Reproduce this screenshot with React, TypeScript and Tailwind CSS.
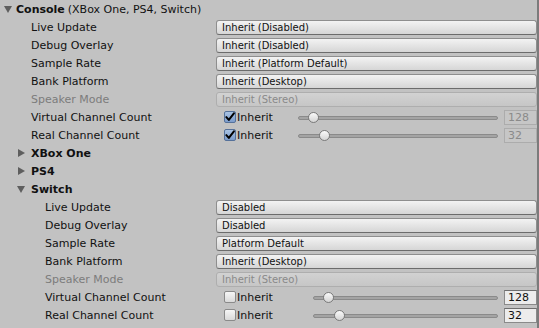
import type { ReactNode } from "react";

const font = { fontFamily: '"DejaVu Sans", Verdana, sans-serif' };

function DownArrow({ className }: { className: string }) {
  return (
    <svg width="8" height="7" viewBox="0 0 8 7" className={className}>
      <path d="M0 0 H8 L4 7 Z" fill="#5e5e5e" />
    </svg>
  );
}

function RightArrow({ className }: { className: string }) {
  return (
    <svg width="7" height="8" viewBox="0 0 7 8" className={className}>
      <path d="M0 0 L7 4 L0 8 Z" fill="#5e5e5e" />
    </svg>
  );
}

function Row({
  indent,
  label,
  disabled,
  children,
}: {
  indent: number;
  label: string;
  disabled?: boolean;
  children: ReactNode;
}) {
  return (
    <div className="flex h-[18px] items-center">
      <div
        className={`w-[216px] shrink-0 text-[11px] leading-none ${
          disabled ? "text-[#7c7c7c]" : "text-[#111]"
        } ${indent === 2 ? "pl-[45px]" : "pl-[31px]"}`}
      >
        {label}
      </div>
      <div className="flex-1 min-w-0">{children}</div>
    </div>
  );
}

function Popup({ value, disabled }: { value: string; disabled?: boolean }) {
  return (
    <div
      className={`h-[15px] rounded-[3px] border pl-[5px] text-[10px] leading-[13px] whitespace-nowrap ${
        disabled
          ? "border-[#aeaeae] bg-gradient-to-b from-[#d2d2d2] to-[#c6c6c6] text-[#8a8a8a]"
          : "border-[#8e8e8e] border-b-[#6c6c6c] bg-gradient-to-b from-[#f3f3f3] to-[#d6d6d6] text-[#111]"
      }`}
    >
      {value}
    </div>
  );
}

function Checkbox({ checked }: { checked: boolean }) {
  return checked ? (
    <div className="flex h-[12px] w-[12px] items-center justify-center rounded-[2px] border border-[#55719a] bg-gradient-to-b from-[#a9c3e4] to-[#7c9ccb]">
      <svg width="11" height="10" viewBox="0 0 11 10">
        <path
          d="M1.5 5.2 L4.2 8.2 L9.8 1"
          fill="none"
          stroke="#000"
          strokeWidth="2.2"
          strokeLinecap="round"
          strokeLinejoin="round"
        />
      </svg>
    </div>
  ) : (
    <div className="h-[12px] w-[12px] rounded-[2px] border border-[#8a8a8a] bg-gradient-to-b from-[#f6f6f6] to-[#d9d9d9]" />
  );
}

function ChannelControl({
  checked,
  knob,
  value,
  toggleWidth,
}: {
  checked: boolean;
  knob: number;
  value: string;
  toggleWidth: string;
}) {
  return (
    <div className="flex items-center">
      <div className={`flex shrink-0 items-center pl-[8px] ${toggleWidth}`}>
        <Checkbox checked={checked} />
        <span className="ml-[1px] text-[11px] leading-none text-[#111]">
          Inherit
        </span>
      </div>
      <div className="relative h-[11px] flex-1">
        <div className="absolute left-0 right-0 top-[4px] h-[4px] rounded-full border border-[#8a8a8a] bg-[#a4a4a4]" />
        <div
          className="absolute top-0 h-[11px] w-[11px] rounded-full border border-[#7a7a7a] bg-gradient-to-b from-[#fafafa] to-[#d4d4d4]"
          style={{ left: knob - 5 }}
        />
      </div>
      <div
        className={`ml-[6px] h-[15px] w-[33px] shrink-0 border pl-[3px] text-[11px] leading-[13px] ${
          checked
            ? "border-[#acacac] bg-[#c6c6c6] text-[#8a8a8a]"
            : "border-[#8a8a8a] border-t-[#6e6e6e] bg-[#ececec] text-[#111]"
        }`}
      >
        {value}
      </div>
    </div>
  );
}

function Settings({
  indent,
  values,
  inherit,
}: {
  indent: number;
  values: string[];
  inherit: boolean;
}) {
  const toggleWidth = inherit ? "w-[82px]" : "w-[97px]";
  return (
    <>
      <Row indent={indent} label="Live Update">
        <Popup value={values[0]} />
      </Row>
      <Row indent={indent} label="Debug Overlay">
        <Popup value={values[1]} />
      </Row>
      <Row indent={indent} label="Sample Rate">
        <Popup value={values[2]} />
      </Row>
      <Row indent={indent} label="Bank Platform">
        <Popup value={values[3]} />
      </Row>
      <Row indent={indent} label="Speaker Mode" disabled>
        <Popup value="Inherit (Stereo)" disabled />
      </Row>
      <Row indent={indent} label="Virtual Channel Count">
        <ChannelControl
          checked={inherit}
          knob={15}
          value="128"
          toggleWidth={toggleWidth}
        />
      </Row>
      <Row indent={indent} label="Real Channel Count">
        <ChannelControl
          checked={inherit}
          knob={26}
          value="32"
          toggleWidth={toggleWidth}
        />
      </Row>
    </>
  );
}

function Foldout({
  open,
  title,
}: {
  open: boolean;
  title: string;
}) {
  return (
    <div className="flex h-[18px] items-center pl-[17px] text-[11px] font-bold leading-none text-[#111]">
      {open ? (
        <DownArrow className="mr-[6px]" />
      ) : (
        <RightArrow className="ml-[1px] mr-[6px]" />
      )}
      {title}
    </div>
  );
}

export default function App() {
  return (
    <div
      className="h-[328px] w-[539px] overflow-hidden border-r-2 border-[#7b7b7b] bg-[#c2c2c2]"
      style={font}
    >
      <div className="flex h-[18px] items-center pl-[4px] text-[11px] leading-none text-[#111]">
        <DownArrow className="mr-[4px]" />
        <span className="font-bold">Console</span>
        <span className="ml-[3px]">(XBox One, PS4, Switch)</span>
      </div>
      <Settings
        indent={1}
        inherit
        values={[
          "Inherit (Disabled)",
          "Inherit (Disabled)",
          "Inherit (Platform Default)",
          "Inherit (Desktop)",
        ]}
      />
      <Foldout open={false} title="XBox One" />
      <Foldout open={false} title="PS4" />
      <Foldout open title="Switch" />
      <Settings
        indent={2}
        inherit={false}
        values={["Disabled", "Disabled", "Platform Default", "Inherit (Desktop)"]}
      />
    </div>
  );
}
